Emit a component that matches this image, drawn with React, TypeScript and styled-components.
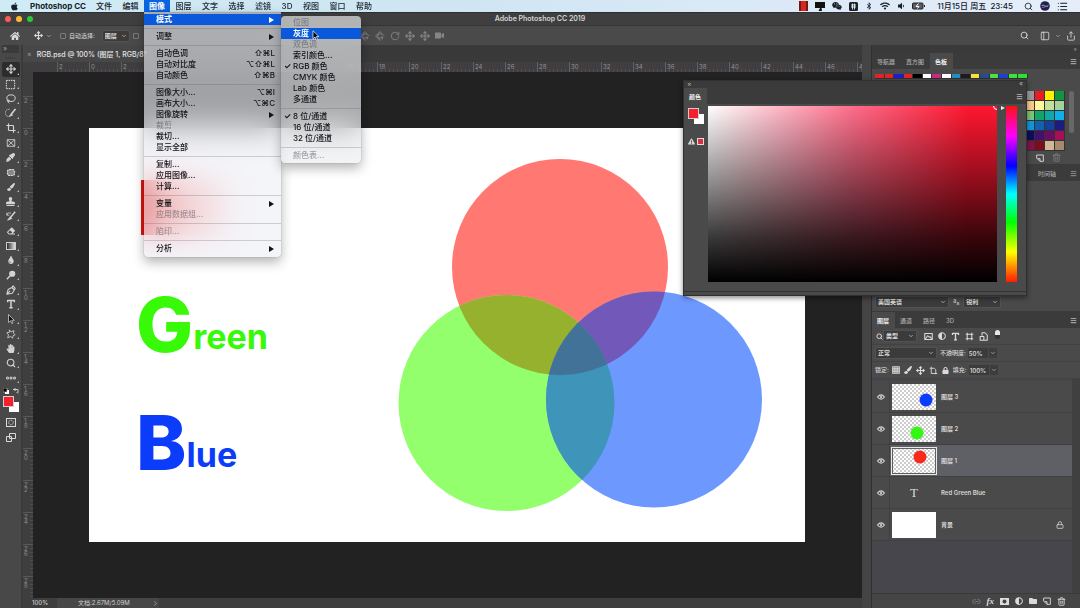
import React from 'react';
import styled, { createGlobalStyle, css } from 'styled-components';
import {
  Move, SquareDashed, Lasso, Crop, Search, Ellipsis, ChevronDown, ChevronRight, Menu as MenuIcon,
  Share, Lock, Trash2, Rotate3d, RotateCw, Link2, List, PanelLeft,
} from 'lucide-react';
import {
  FaApple, FaWeixin, FaBluetoothB, FaWifi, FaVolumeDown, FaEyeDropper, FaPaintBrush, FaStamp, FaEraser, FaTint,
  FaHandPaper, FaHome, FaFolder, FaAdjust, FaLock, FaExclamationTriangle, FaVideo,
} from 'react-icons/fa';

const Global = createGlobalStyle`
  * { box-sizing: border-box; }
  body { margin: 0; background: #222; }
  body, button, select, input {
    font-family: Inter, "Noto Sans CJK SC", sans-serif;
  }
  button, select, input { margin: 0; padding: 0; border: 0; background: none; color: inherit; font-size: inherit; }
  ul { list-style: none; margin: 0; padding: 0; }
  svg { display: block; flex: none; }
`;

const Shell = styled.div`
  min-height: 100vh;
  display: flex;
  flex-direction: column;
  background: #464646;
  color: #d6d6d6;
  font-size: 7px;
  line-height: 10px;
`;

/* ---------- system menu bar ---------- */

const MacBar = styled.header`
  position: relative;
  z-index: 5;
  height: 13px;
  display: flex;
  align-items: center;
  background: linear-gradient(90deg, #cfecf6, #cfe5f2 40%, #e6edfa);
  border-bottom: 1px solid #2c3034;
  color: #15202a;
  font-size: 8px;
  line-height: 12px;
`;
const AppleSlot = styled.div`
  width: 30px;
  padding-left: 10px;
`;
const AppName = styled.strong`
  width: 61px;
  font-weight: 700;
  white-space: nowrap;
`;
const MenuList = styled.ul`
  width: 286px;
  display: flex;
  justify-content: space-between;
`;
const MenuEntry = styled.li`
  position: relative;
`;
const MenuButton = styled.button<{ $open?: boolean }>`
  display: block;
  height: 12px;
  padding: 0 5px;
  line-height: 12px;
  font-weight: 500;
  white-space: nowrap;
  ${(p) => p.$open && css`background: #0a63e0; color: #fff; font-weight: 700;`}
`;
const Tray = styled.div`
  margin-left: auto;
  padding-right: 12px;
  display: flex;
  align-items: center;
  gap: 7px;
  white-space: nowrap;
`;
const Clock = styled.span`
  padding: 0 4px 0 5px;
  font-weight: 500;
`;

/* ---------- drop-down menus ---------- */

const Dropdown = styled.ul<{ $sub?: boolean }>`
  position: absolute;
  top: ${(p) => (p.$sub ? '2px' : '100%')};
  left: ${(p) => (p.$sub ? '100%' : '0')};
  width: ${(p) => (p.$sub ? 80 : 137)}px;
  padding: ${(p) => (p.$sub ? '1px 0 2px' : '2px 0 3px')};
  border-radius: ${(p) => (p.$sub ? '4px' : '0 0 4px 4px')};
  font-size: 8px;
  line-height: 11px;
  font-weight: 500;
  color: #111216;
`;
const Glass = styled.div<{ $sub?: boolean }>`
  position: absolute;
  inset: 0;
  border-radius: inherit;
  background: ${(p) => (p.$sub ? 'rgba(236, 238, 242, .66)' : 'rgba(238, 239, 245, .62)')};
  backdrop-filter: blur(16px);
  box-shadow: 0 0 1px rgba(0, 0, 0, .5), 0 5px 12px rgba(0, 0, 0, .3);
`;
const Item = styled.li`
  position: relative;
`;
const ItemButton = styled.button<{ $on?: boolean; $sub?: boolean }>`
  display: flex;
  align-items: center;
  width: 100%;
  height: 11px;
  padding: 0 6px 0 12px;
  line-height: 11px;
  font-weight: 500;
  white-space: nowrap;
  text-align: left;
  ${(p) => p.$sub && css`padding-left: 3px;`}
  &:disabled { color: rgba(60, 60, 68, .45); }
  ${(p) => p.$on && css`background: #0a59dc; color: #fff; font-weight: 700;`}
`;
const Tick = styled.span`
  width: 9px;
  font-weight: 700;
`;
const Keys = styled.span`
  margin-left: auto;
`;
const Arrow = styled.span`
  margin-left: auto;
  margin-right: 1px;
  border-left: 5px solid currentColor;
  border-top: 3px solid transparent;
  border-bottom: 3px solid transparent;
`;
const Rule = styled.li`
  position: relative;
  height: 6px;
  display: flex;
  align-items: center;
  &::after { content: ''; flex: 1; height: 1px; background: rgba(80, 80, 90, .24); }
`;
const Pointer = styled.svg`
  position: absolute;
  left: 31px;
  top: 2px;
  z-index: 2;
`;

/* ---------- window chrome ---------- */

const TitleBar = styled.div`
  display: grid;
  grid-template-columns: 1fr auto 1fr;
  align-items: center;
  height: 13px;
  padding: 0 5px;
  background: #3f3f3f;
  border-bottom: 1px solid #343434;
  font-size: 7px;
  font-weight: 600;
`;
const Lights = styled.div`
  display: flex;
  gap: 5px;
`;
const Light = styled.button`
  width: 6px;
  height: 6px;
  border-radius: 50%;
  background: ${(p) => p.color};
`;
const OptionsBar = styled.div`
  display: flex;
  align-items: center;
  height: 19px;
  padding: 0 4px 0 10px;
  background: #4a4a4a;
  font-size: 6px;
  white-space: nowrap;
`;
const OptionsLeft = styled.div`
  display: flex;
  align-items: center;
  gap: 3px;
  width: 350px;
`;
const IconButton = styled.button<{ $dim?: boolean }>`
  display: flex;
  align-items: center;
  justify-content: center;
  color: ${(p) => (p.$dim ? '#858585' : '#dadada')};
`;
const OptionSlot = styled.div`
  width: 21px;
`;
const IconRow = styled.div<{ $gap: number }>`
  display: flex;
  align-items: center;
  gap: ${(p) => p.$gap}px;
`;
const PushRight = styled(IconRow)`
  margin-left: auto;
`;
const CheckLabel = styled.label`
  display: flex;
  align-items: center;
  gap: 3px;
`;
const Check = styled.input`
  appearance: none;
  width: 6px;
  height: 6px;
  border: 1px solid #7c7c7c;
  border-radius: 1px;
`;
const SelectBox = styled.span<{ $w: number }>`
  display: flex;
  align-items: center;
  width: ${(p) => p.$w}px;
  height: 12px;
  padding-right: 2px;
  background: #3b3b3b;
  border: 1px solid #525252;
  border-radius: 1px;
`;
const Select = styled.select`
  appearance: none;
  flex: 1;
  min-width: 0;
  height: 10px;
  padding-left: 2px;
  line-height: 10px;
  font-weight: 600;
  color: #d8d8d8;
`;

/* ---------- workspace ---------- */

const Workspace = styled.div`
  position: relative;
  flex: 1;
  display: flex;
`;
const Tools = styled.nav`
  width: 23px;
  padding: 0 2px;
  display: flex;
  flex-direction: column;
  align-items: center;
  background: #484848;
  border-right: 2px solid #3a3a3a;
`;
const ToolsHead = styled.div`
  align-self: stretch;
  height: 8px;
  line-height: 7px;
  padding-left: 1px;
  background: #3a3a3a;
  color: #9a9a9a;
`;
const Grip = styled.div`
  width: 10px;
  height: 2px;
  margin: 4px 0 3px;
  background: repeating-linear-gradient(90deg, #3a3a3a 0 1px, transparent 1px 2px);
`;
const ToolList = styled.div`
  display: grid;
  grid-auto-rows: 1fr;
  height: 323px;
`;
const Tool = styled.button<{ $on?: boolean }>`
  position: relative;
  width: 18px;
  display: flex;
  align-items: center;
  justify-content: center;
  color: #d4d4d4;
  border-radius: 2px;
  background: ${(p) => (p.$on ? '#2c2c2c' : 'none')};
  &::after {
    content: '';
    position: absolute;
    right: 1px;
    bottom: 2px;
    border-left: 2px solid transparent;
    border-bottom: 2px solid #b8b8b8;
  }
`;
const Swap = styled.div`
  display: flex;
  gap: 4px;
  height: 11px;
  align-items: center;
`;
const ColorPair = styled.div`
  display: grid;
  grid-template-columns: 11px 5px;
  grid-template-rows: 11px 5px;
`;
const Back = styled.button`
  grid-area: 1 / 1 / 3 / 3;
  margin: 6px 0 0 6px;
  background: #fff;
`;
const Fore = styled.button`
  grid-area: 1 / 1;
  background: #f61f2c;
  border: 1px solid #cfcfcf;
`;
const ModeButtons = styled.div`
  margin-top: 6px;
  display: grid;
  gap: 6px;
  color: #c4c4c4;
`;

const DocColumn = styled.main`
  flex: 1;
  min-width: 0;
  display: flex;
  flex-direction: column;
  background: #393939;
`;
const DocTabs = styled.div`
  display: flex;
  height: 17px;
`;
const DocTab = styled.button`
  display: flex;
  align-items: center;
  gap: 5px;
  padding: 0 6px 0 4px;
  background: #474747;
  font-size: 7px;
  font-weight: 500;
  color: #e6e6e6;
  white-space: nowrap;
`;
const CloseMark = styled.span`
  color: #a0a0a0;
  font-weight: 400;
`;
const RulerTop = styled.div`
  display: flex;
  height: 10px;
  padding-left: 34px;
  overflow: hidden;
  background: #403e40;
`;
const TopMark = styled.span`
  flex: none;
  width: 32px;
  height: 10px;
  padding-left: 1px;
  font-size: 6px;
  line-height: 10px;
  color: #919191;
  border-left: 1px solid #606060;
  background: repeating-linear-gradient(90deg, transparent 0 3px, #504e50 3px 4px) 0 100% / 100% 3px no-repeat;
`;
const DocBody = styled.div`
  flex: 1;
  display: flex;
`;
const RulerSide = styled.div`
  width: 10px;
  padding-top: 24px;
  background: #3f3e3f;
  contain: size;
  overflow: hidden;
`;
const SideMark = styled.div`
  height: 32px;
  padding: 1px 0 0 1px;
  display: flex;
  flex-direction: column;
  font-size: 6px;
  line-height: 5px;
  color: #8a8a8a;
  border-top: 1px solid #585858;
  background: repeating-linear-gradient(180deg, transparent 0 3px, #4e4e4e 3px 4px) 100% 0 / 3px 100% no-repeat;
`;
const Canvas = styled.div`
  flex: 1;
  min-width: 0;
  padding: 56px 0 56px 56px;
  background: #222;
`;
const Artboard = styled.div`
  width: 716px;
  max-width: 100%;
  height: 414px;
  display: flex;
  background: #fff;
`;
const Words = styled.div`
  flex: none;
  width: 256px;
  padding: 42px 0 0 47px;
  display: flex;
  flex-direction: column;
  gap: 42px;
`;
const RedPaint = styled.div`
  width: 90px;
  height: 74px;
  padding: 10px 0 0 5px;
  &::before {
    content: '';
    display: block;
    height: 55px;
    background: linear-gradient(90deg, #e0140f 14px, rgba(255, 40, 30, .55) 30px, rgba(255, 60, 50, .2));
  }
`;
const Word = styled.div`
  height: 76px;
  font-family: Inter, Arial, sans-serif;
  font-weight: 800;
  font-size: 76px;
  line-height: 76px;
  color: ${(p) => p.color};
  white-space: nowrap;
`;
const Small = styled.span`
  font-size: 34px;
  line-height: 1;
  font-weight: 700;
  vertical-align: 3px;
`;
const StatusBar = styled.footer`
  display: flex;
  align-items: center;
  height: 10px;
  padding-left: 9px;
  background: #3e3e3e;
  color: #d0d0d0;
  font-size: 6px;
  line-height: 10px;
  white-space: nowrap;
`;
const Zoom = styled.span`
  width: 25px;
  font-weight: 500;
`;
const DocInfo = styled.button`
  display: flex;
  align-items: center;
  justify-content: space-between;
  width: 102px;
  height: 10px;
  padding-left: 21px;
  background: #474747;
  line-height: 10px;
`;

/* ---------- right dock ---------- */

const Gutter = styled.div`
  width: 10px;
  background: #444;
  border-right: 1px solid #303030;
`;
const Dock = styled.aside`
  width: 208px;
  display: flex;
  flex-direction: column;
  background: #4a4a4a;
  font-size: 6px;
`;
const DockHead = styled.div`
  height: 8px;
  padding-right: 3px;
  line-height: 7px;
  text-align: right;
  background: #3a3a3a;
  color: #9a9a9a;
`;
const Tabs = styled.div`
  display: flex;
  align-items: stretch;
  height: 16px;
  padding-right: 3px;
  background: #3b3b3b;
`;
const Tab = styled.button<{ $on?: boolean }>`
  padding: 0 6px 0 5px;
  font-size: 6px;
  white-space: nowrap;
  color: ${(p) => (p.$on ? '#f0f0f0' : '#a8a8a8')};
  font-weight: ${(p) => (p.$on ? 700 : 500)};
  background: ${(p) => (p.$on ? '#4a4a4a' : 'none')};
`;
const TabMenu = styled(IconButton)`
  margin-left: auto;
  color: #a0a0a0;
`;
const SwatchArea = styled.div`
  display: flex;
  flex-direction: column;
  gap: 12px;
  height: 82px;
  padding: 5px 6px 0 3px;
`;
const Recent = styled.div`
  display: grid;
  grid-template-columns: repeat(16, 1fr);
  width: 153px;
  height: 6px;
`;
const Chip = styled.button`
  background: ${(p) => p.color};
  border: solid #333;
  border-width: 0 1px 1px 0;
`;
const SwatchScroll = styled.div`
  display: flex;
  justify-content: space-between;
`;
const SwatchGrid = styled.div`
  display: grid;
  grid-template-columns: repeat(19, 10px);
  grid-auto-rows: 10px;
`;
const Scrollbar = styled.div`
  width: 5px;
  height: 42px;
  border-radius: 3px;
  background: #686868;
`;
const SwatchFoot = styled.div`
  display: flex;
  align-items: center;
  justify-content: flex-end;
  gap: 8px;
  height: 14px;
  padding-right: 19px;
  border-bottom: 1px solid #3a3a3a;
`;
const TimelineTabs = styled(Tabs)`
  justify-content: flex-end;
  gap: 8px;
`;
const CharPanel = styled.div`
  display: flex;
  align-items: flex-end;
  gap: 4px;
  height: 131px;
  padding: 0 0 3px 3px;
  border-bottom: 1px solid #3a3a3a;
`;
const FormRow = styled.div`
  display: flex;
  align-items: center;
  height: 17px;
  padding-left: 3px;
  border-bottom: 1px solid #424242;
  font-weight: 500;
  white-space: nowrap;
`;
const Spacer = styled.span<{ $w: number }>`
  width: ${(p) => p.$w}px;
`;
const Pill = styled.span`
  width: 5px;
  height: 9px;
  margin: 0 0 4px 2px;
  border-radius: 3px;
  background: linear-gradient(#e6e6e6 5px, #333 5px);
`;
const FieldLabel = styled.label`
  display: flex;
  align-items: center;
  gap: 2px;
`;
const Field = styled.input`
  width: 20px;
  height: 10px;
  padding-left: 1px;
  background: #3b3b3b;
  font-weight: 600;
  font-size: 6px;
`;
const Stepper = styled(IconButton)`
  height: 10px;
  width: 8px;
  margin-left: 1px;
  background: #3d3d3d;
`;
const Layers = styled.div`
  flex: 1;
  display: flex;
  background: #404040;
`;
const LayerList = styled.ul`
  flex: 1;
  margin-right: 8px;
  padding-top: 2px;
  background: #46464c;
`;
const LayerRow = styled.li`
  display: flex;
  align-items: stretch;
  height: 32px;
  background: #4a4a4a;
  border-bottom: 1px solid #404040;
  font-size: 6px;
`;
const EyeCell = styled.button`
  width: 18px;
  display: flex;
  align-items: center;
  justify-content: center;
  border-right: 1px solid #404040;
  color: #d8d8d8;
`;
const LayerMain = styled.div<{ $on?: boolean }>`
  flex: 1;
  display: flex;
  align-items: center;
  gap: 4px;
  padding: 0 8px 0 1px;
  font-weight: 600;
  background: ${(p) => (p.$on ? '#5f5f66' : 'none')};
`;
const Thumb = styled.div<{ $kind: 'alpha' | 'plain' | 'type'; $on?: boolean }>`
  position: relative;
  width: 46px;
  height: 28px;
  display: flex;
  align-items: center;
  justify-content: center;
  border: 1px solid ${(p) => (p.$on ? '#e8e8e8' : 'transparent')};
  background-clip: content-box;
  ${(p) => p.$on && css`padding: 1px;`}
  ${(p) => p.$kind === 'plain' && css`background-color: #fff;`}
  ${(p) => p.$kind === 'alpha' && css`
    background-image: conic-gradient(#ccc 25%, #fff 0 50%, #ccc 0 75%, #fff 0);
    background-size: 4px 4px;
  `}
`;
const TypeGlyph = styled.span`
  font-family: "Liberation Serif", serif;
  font-size: 13px;
  font-weight: 400;
  color: #dcdcdc;
`;
const LayerName = styled.span`
  flex: 1;
`;
const LayerFoot = styled.div`
  display: flex;
  align-items: center;
  justify-content: flex-end;
  gap: 6px;
  height: 15px;
  padding-right: 14px;
  background: #454545;
  border-top: 1px solid #3a3a3a;
`;
const Fx = styled.i`
  font-family: "Liberation Serif", serif;
  font-size: 9px;
  font-weight: 700;
`;

/* ---------- floating colour window ---------- */

const ColorWindow = styled.section`
  position: absolute;
  top: 35px;
  right: 53px;
  width: 344px;
  z-index: 2;
  background: #4a4a4a;
  border: 1px solid #303030;
  box-shadow: 0 2px 5px rgba(0, 0, 0, .45);
`;
const ColorHead = styled.div`
  display: flex;
  justify-content: space-between;
  height: 7px;
  padding: 0 3px;
  line-height: 6px;
  background: #3a3a3a;
  color: #b0b0b0;
`;
const ColorBody = styled.div`
  display: flex;
  height: 187px;
  padding: 2px 9px 0 4px;
`;
const ColorSide = styled.div`
  width: 20px;
  padding-top: 2px;
`;
const Warn = styled.div`
  display: flex;
  align-items: center;
  gap: 2px;
  margin-top: 14px;
`;
const WarnChip = styled.button`
  width: 7px;
  height: 7px;
  background: #d8303c;
  border: 1px solid #ddd;
`;
const SatField = styled.div`
  position: relative;
  flex: 1;
  height: 176px;
  overflow: hidden;
  background: linear-gradient(to top, #000, rgba(0, 0, 0, .78) 25%, rgba(0, 0, 0, .46) 55%, transparent), linear-gradient(90deg, #fff, #ff6d8a 50%, #ff1730 90%);
`;
const Ring = styled.span`
  position: absolute;
  right: -4px;
  top: -4px;
  width: 8px;
  height: 8px;
  border: 1px solid #fff;
  border-radius: 50%;
`;
const HuePointer = styled.span`
  margin: 0 1px 0 4px;
  height: 0;
  border-left: 4px solid #f0f0f0;
  border-top: 2px solid transparent;
  border-bottom: 2px solid transparent;
`;
const Hue = styled.div`
  width: 11px;
  height: 176px;
  background: linear-gradient(#ff1010, #f0f 17%, #00f 34%, #0ff 50%, #0f0 66%, #ff0 83%, #ff1a00);
`;
const ColorFoot = styled.div`
  height: 4px;
  border-top: 1px solid #333;
`;

/* ---------- small drawings ---------- */

const Glyph = ({ d, size = 10, fill = 'none', w = 1 }: { d: string; size?: number; fill?: string; w?: number }) => (
  <svg width={size} height={size} viewBox="0 0 12 12" fill={fill} stroke="currentColor" strokeWidth={w} strokeLinejoin="round">
    <path d={d} />
  </svg>
);
const NewPage = () => <Glyph size={8} w={1.4} d="M1 1.500h10v9.500h-5l-4-4h4v4M1 1.500v5" />;
const MoveArrows = ({ size = 10 }: { size?: number }) => <Move size={size} strokeWidth={2.8} />;
const Hamburger = () => <MenuIcon size={7} strokeWidth={4} />;
const GradientIcon = () => (
  <svg width="10" height="8" viewBox="0 0 10 8">
    <defs><linearGradient id="tg"><stop offset="0" stopColor="#222" /><stop offset="1" stopColor="#eee" /></linearGradient></defs>
    <rect x=".5" y=".5" width="9" height="7" fill="url(#tg)" stroke="#ccc" />
  </svg>
);
const PatchIcon = () => (
  <svg width="10" height="9" viewBox="0 0 10 9"><rect x="1.500" y="1.500" width="7" height="6" rx="2" fill="#888" stroke="#ddd" strokeWidth="1.200" strokeDasharray="2 .6" /></svg>
);
const Dodge = () => (
  <svg width="10" height="10" viewBox="0 0 12 12"><circle cx="7.500" cy="4.500" r="3.700" fill="currentColor" /><path d="M5 7L1 11" stroke="currentColor" strokeWidth="1.600" /></svg>
);
const QuickSelect = () => (
  <svg width="11" height="10" viewBox="0 0 12 11" fill="none" stroke="currentColor">
    <path d="M5 1.500A4 4 0 1 0 6 9" strokeDasharray="1.500 1" />
    <path d="M11.500 1L7 6.500" strokeWidth="1.800" /><path d="M7 6l-2 3 3-1z" fill="currentColor" />
  </svg>
);
const HistoryBrush = () => (
  <svg width="10" height="10" viewBox="0 0 12 12" fill="none" stroke="currentColor">
    <path d="M11 1L5 8" strokeWidth="1.800" /><path d="M5 7l-3 4 5-2z" fill="currentColor" /><path d="M1 5a3 3 0 0 1 5-2M1 2v3h3" />
  </svg>
);
const Pen = () => (
  <svg width="10" height="10" viewBox="0 0 12 12" fill="none" stroke="currentColor" strokeWidth="1.300">
    <path d="M1 11l1.500-5.500L7 3l3 3-2.500 4zM1 11l4-4M7 3l1.500-2L11 4l-1 2" strokeLinejoin="round" />
  </svg>
);
const Arrowhead = () => (
  <svg width="8" height="10" viewBox="0 0 8 10"><path d="M1.500.5v8l2-1.800 1.300 2.900 1.200-.6-1.300-2.700h2.600z" fill="#111" stroke="#ccc" strokeWidth=".8" /></svg>
);
const TypeTool = ({ size = 10 }: { size?: number }) => (
  <Glyph size={size} w={1.8} d="M2 4V1.800h8V4M6 2v8.500M4 10.500h4" />
);
const LayerEye = () => (
  <svg width="8" height="6" viewBox="0 0 8 6"><path d="M.5 3Q4-1.200 7.500 3 4 7.200.5 3z" fill="none" stroke="currentColor" strokeWidth="1.100" /><circle cx="4" cy="3" r="1.100" fill="currentColor" /></svg>
);

const toolset: [string, React.ReactNode][] = [
  ['移动', <MoveArrows />],
  ['选框', <SquareDashed size={11} strokeWidth={2.4} />],
  ['套索', <Lasso size={10} strokeWidth={2.4} />],
  ['快速选择', <QuickSelect />],
  ['裁剪', <Crop size={10} strokeWidth={2.8} />],
  ['图框', <Glyph d="M1.500 2h9v8h-9zM1.500 2l9 8M10.500 2l-9 8" />],
  ['吸管', <FaEyeDropper size={9} />],
  ['修补', <PatchIcon />],
  ['画笔', <FaPaintBrush size={8} />],
  ['仿制图章', <FaStamp size={9} />],
  ['历史记录画笔', <HistoryBrush />],
  ['橡皮擦', <FaEraser size={8} />],
  ['渐变', <GradientIcon />],
  ['模糊', <FaTint size={8} />],
  ['减淡', <Dodge />],
  ['钢笔', <Pen />],
  ['文字', <TypeTool />],
  ['路径选择', <Arrowhead />],
  ['自定形状', <Glyph d="M4 1l2 2.500L9.500 2 9 5l2 2-2.500 1L8 11 5.500 9 2 10.500 3 7 1 4.500 4 4z" />],
  ['抓手', <FaHandPaper size={9} />],
  ['缩放', <Search size={10} strokeWidth={2.6} />],
  ['更多', <Ellipsis size={12} strokeWidth={4} />],
];

type Entry = { t: string; keys?: string; sub?: boolean; off?: boolean; on?: boolean; tick?: boolean } | null;

const imageMenu: Entry[] = [
  { t: '模式', sub: true, on: true }, null,
  { t: '调整', sub: true }, null,
  { t: '自动色调', keys: '⇧⌘L' }, { t: '自动对比度', keys: '⌥⇧⌘L' }, { t: '自动颜色', keys: '⇧⌘B' }, null,
  { t: '图像大小...', keys: '⌥⌘I' }, { t: '画布大小...', keys: '⌥⌘C' }, { t: '图像旋转', sub: true },
  { t: '裁剪', off: true }, { t: '裁切...' }, { t: '显示全部' }, null,
  { t: '复制...' }, { t: '应用图像...' }, { t: '计算...' }, null,
  { t: '变量', sub: true }, { t: '应用数据组...', off: true }, null,
  { t: '陷印...', off: true }, null,
  { t: '分析', sub: true },
];
const modeMenu: Entry[] = [
  { t: '位图', off: true }, { t: '灰度', on: true }, { t: '双色调', off: true }, { t: '索引颜色...' },
  { t: 'RGB 颜色', tick: true }, { t: 'CMYK 颜色' }, { t: 'Lab 颜色' }, { t: '多通道' }, null,
  { t: '8 位/通道', tick: true }, { t: '16 位/通道' }, { t: '32 位/通道' }, null,
  { t: '颜色表...', off: true },
];

const ModeMenu = () => (
  <Dropdown $sub>
    <Glass $sub />
    {modeMenu.map((e, i) => e ? (
      <Item key={i}>
        <ItemButton $sub $on={e.on} disabled={e.off}><Tick>{e.tick ? '✓' : ''}</Tick>{e.t}</ItemButton>
        {e.on && (
          <Pointer width="8" height="11" viewBox="0 0 8 11">
            <path d="M1 .8v8l2-1.800 1.400 3.200 1.300-.6-1.400-3h2.600z" fill="#000" stroke="#fff" strokeWidth=".7" />
          </Pointer>
        )}
      </Item>
    ) : <Rule key={i} />)}
  </Dropdown>
);

const ImageMenu = () => (
  <Dropdown>
    <Glass />
    {imageMenu.map((e, i) => e ? (
      <Item key={i}>
        <ItemButton $on={e.on} disabled={e.off}>
          {e.t}
          {e.keys && <Keys>{e.keys}</Keys>}
          {e.sub && <Arrow />}
        </ItemButton>
        {e.on && <ModeMenu />}
      </Item>
    ) : <Rule key={i} />)}
  </Dropdown>
);

const menus = ['文件', '编辑', '图像', '图层', '文字', '选择', '滤镜', '3D', '视图', '窗口', '帮助'];

const recent = ['#e02428', '#e02428', '#1b1bd8', '#e02428', '#000', '#fff', '#c92a80', '#fff', '#1f8fc4', '#1c1c1c', '#f5e342', '#274a90', '#4be04a', '#1f3fd8', '#3be33c', '#2ce22c'];
const swatchRows = [
  ['#9a9a9a', '#e81c26', '#fff100', '#0f9640'],
  ['#fbc88c', '#fff79a', '#c4df9a', '#a2d39b'],
  ['#7cc576', '#12a56a', '#10a8a4', '#12aeea'],
  ['#1296dc', '#1161ae', '#12429a', '#1b1c82'],
  ['#0c0d5c', '#43106c', '#6a0e64', '#a60f58'],
  ['#85104a', '#7c0c1e', '#d4b896', '#a38a70'],
];
const swatches = swatchRows.flatMap((row, r) => [
  ...Array.from({ length: 15 }, (_, i) => `hsl(${i * 24} 70% ${75 - r * 11}%)`), ...row,
]);

const layers = [
  { name: '图层 3', dot: '#0a3cff', x: 34, y: 16 },
  { name: '图层 2', dot: '#35f715', x: 25, y: 17 },
  { name: '图层 1', dot: '#f72a1c', x: 28, y: 9, on: true },
  { name: 'Red Green Blue', type: true },
  { name: '背景', locked: true },
];

const Drop = ({ w, label, options }: { w: number; label: string; options: string[] }) => (
  <SelectBox $w={w}>
    <Select aria-label={label}>{options.map((o) => <option key={o}>{o}</option>)}</Select>
    <ChevronDown size={6} strokeWidth={2.5} />
  </SelectBox>
);

const topMarks = Array.from({ length: 26 }, (_, i) => Math.abs(i * 2 - 2));
const sideMarks = Array.from({ length: 16 }, (_, i) => Math.abs(i * 2 - 2));

const Circles = () => (
  <svg width="460" height="414" viewBox="0 0 460 414">
    <defs>
      <clipPath id="inRed"><circle cx="215" cy="139" r="108" /></clipPath>
      <clipPath id="inGreen"><circle cx="161.500" cy="275" r="108" /></clipPath>
    </defs>
    <circle cx="215" cy="139" r="108" fill="#ff7872" />
    <circle cx="161.500" cy="275" r="108" fill="#93ff6d" />
    <circle cx="309" cy="271.500" r="108" fill="#6d99ff" />
    <g clipPath="url(#inRed)">
      <circle cx="161.500" cy="275" r="108" fill="#95b12d" />
      <circle cx="309" cy="271.500" r="108" fill="#7258b8" />
    </g>
    <g clipPath="url(#inGreen)">
      <circle cx="309" cy="271.500" r="108" fill="#3f94ba" />
      <g clipPath="url(#inRed)"><circle cx="309" cy="271.500" r="108" fill="#437298" /></g>
    </g>
  </svg>
);

export default function App() {
  return (
    <Shell>
      <Global />
      <MacBar>
        <AppleSlot><FaApple size={9} /></AppleSlot>
        <AppName>Photoshop CC</AppName>
        <MenuList>
          {menus.map((m) => (
            <MenuEntry key={m}>
              <MenuButton $open={m === '图像'}>{m}</MenuButton>
              {m === '图像' && <ImageMenu />}
            </MenuEntry>
          ))}
        </MenuList>
        <Tray>
          <svg width="9" height="10" viewBox="0 0 9 10"><path d="M0 0h9v10H0z" fill="#7a1512" /><path d="M2 0h5v10H2z" fill="#d4271f" /></svg>
          <svg width="10" height="9" viewBox="0 0 10 9"><path d="M0 0h10v6H6.500L7 9H3.500L5 6H0z" fill="#111" /></svg>
          <FaWeixin size={10} />
          <svg width="9" height="9" viewBox="0 0 9 9"><rect width="9" height="9" rx="1.500" fill="#1a2028" /><path d="M2 3h5M2 5h5M3.500 1.500v6M5.500 1.500v6" stroke="#fff" strokeWidth=".8" /></svg>
          <FaBluetoothB size={8} />
          <FaWifi size={10} />
          <FaVolumeDown size={8} />
          <svg width="13" height="8" viewBox="0 0 13 8"><rect x=".5" y="1" width="10.500" height="6" rx="1" fill="#555c66" stroke="#222" /><path d="M12.500 3v2" stroke="#222" /><path d="M6.500 1.500L4 4.500h3L5.500 6.500" stroke="#fff" fill="none" /></svg>
          <Clock>11月15日 周五&nbsp; 23:45</Clock>
          <Search size={9} strokeWidth={2.2} />
          <svg width="10" height="10" viewBox="0 0 10 10"><circle cx="5" cy="5" r="4.800" fill="#20224a" /><path d="M1.500 5c2-3 4 3 7-1" stroke="#6cf" fill="none" /><path d="M2 6c2 2 4-3 6 0" stroke="#e5539b" fill="none" /></svg>
          <List size={11} strokeWidth={2.4} />
        </Tray>
      </MacBar>

      <TitleBar>
        <Lights>
          <Light color="#fc5b57" aria-label="关闭" />
          <Light color="#fdbc2e" aria-label="最小化" />
          <Light color="#2ac840" aria-label="缩放" />
        </Lights>
        <span>Adobe Photoshop CC 2019</span>
      </TitleBar>

      <OptionsBar>
        <OptionsLeft>
          <OptionSlot><IconButton aria-label="主页"><FaHome size={10} /></IconButton></OptionSlot>
          <IconButton aria-label="移动工具"><MoveArrows size={9} /></IconButton>
          <ChevronDown size={6} />
          <Spacer $w={2} />
          <CheckLabel><Check type="checkbox" />自动选择:</CheckLabel>
          <Spacer $w={1} />
          <Drop w={28} label="自动选择对象" options={['图层', '组']} />
          <Check type="checkbox" aria-label="显示变换控件" />
        </OptionsLeft>
        <IconRow $gap={5}>
          <IconButton $dim aria-label="旋转"><Rotate3d size={10} /></IconButton>
          <IconButton $dim aria-label="环绕"><Rotate3d size={10} /></IconButton>
          <IconButton $dim aria-label="滚动"><RotateCw size={10} /></IconButton>
          <IconButton $dim aria-label="平移"><MoveArrows size={10} /></IconButton>
          <IconButton $dim aria-label="滑动"><MoveArrows size={10} /></IconButton>
          <IconButton $dim aria-label="相机"><FaVideo size={9} /></IconButton>
        </IconRow>
        <PushRight $gap={5}>
          <IconButton aria-label="搜索"><Search size={9} strokeWidth={2.4} /></IconButton>
          <Spacer $w={1} />
          <IconButton aria-label="工作区"><PanelLeft size={10} /></IconButton>
          <ChevronDown size={6} />
          <IconButton aria-label="共享"><Share size={10} /></IconButton>
        </PushRight>
      </OptionsBar>

      <Workspace>
        <Tools>
          <ToolsHead>»</ToolsHead>
          <Grip />
          <ToolList>
            {toolset.map(([name, icon], i) => <Tool key={name} $on={i === 0} aria-label={name}>{icon}</Tool>)}
          </ToolList>
          <Swap>
            <svg width="6" height="6" viewBox="0 0 6 6"><path d="M2 2h4v4H2z" fill="#fff" /><path d="M0 0h4v4H0z" fill="#000" stroke="#ccc" strokeWidth=".6" /></svg>
            <svg width="6" height="6" viewBox="0 0 6 6"><path d="M2 0v3M0 1.500h5v3M3.500 4l1.500 1.500" stroke="#ccc" fill="none" /></svg>
          </Swap>
          <ColorPair><Back aria-label="背景色" /><Fore aria-label="前景色" /></ColorPair>
          <ModeButtons>
            <IconButton aria-label="快速蒙版">
              <svg width="10" height="9" viewBox="0 0 10 9" fill="none" stroke="currentColor"><rect x=".5" y=".5" width="9" height="8" /><circle cx="5" cy="4.500" r="2.300" strokeDasharray="1 .6" /></svg>
            </IconButton>
            <IconButton aria-label="屏幕模式">
              <svg width="10" height="9" viewBox="0 0 10 9" fill="none" stroke="currentColor"><path d="M3.500.5h6v5h-6zM.5 3.500h5v5h-5z" /></svg>
            </IconButton>
          </ModeButtons>
        </Tools>

        <DocColumn>
          <DocTabs>
            <DocTab><CloseMark>×</CloseMark>RGB.psd @ 100% (图层 1, RGB/8*</DocTab>
          </DocTabs>
          <RulerTop>{topMarks.map((n, i) => <TopMark key={i}>{n}</TopMark>)}</RulerTop>
          <DocBody>
            <RulerSide>
              {sideMarks.map((n, i) => <SideMark key={i}>{String(n).split('').map((c, k) => <span key={k}>{c}</span>)}</SideMark>)}
            </RulerSide>
            <Canvas>
              <Artboard>
                <Words>
                  <RedPaint />
                  <Word color="#38fa08">G<Small>reen</Small></Word>
                  <Word color="#0a3cfa">B<Small>lue</Small></Word>
                </Words>
                <Circles />
              </Artboard>
            </Canvas>
          </DocBody>
          <StatusBar>
            <Zoom>100%</Zoom>
            <DocInfo>文档:2.67M/5.09M<ChevronRight size={7} /></DocInfo>
          </StatusBar>
        </DocColumn>

        <Gutter />
        <Dock>
          <DockHead>»</DockHead>
          <Tabs>
            <Tab>导航器</Tab><Tab>直方图</Tab><Tab $on>色板</Tab>
            <TabMenu aria-label="面板菜单"><Hamburger /></TabMenu>
          </Tabs>
          <SwatchArea>
            <Recent>{recent.map((c, i) => <Chip key={i} color={c} aria-label={c} />)}</Recent>
            <SwatchScroll>
              <SwatchGrid>{swatches.map((c, i) => <Chip key={i} color={c} aria-label={c} />)}</SwatchGrid>
              <Scrollbar />
            </SwatchScroll>
          </SwatchArea>
          <SwatchFoot>
            <IconButton aria-label="新建色板"><NewPage /></IconButton>
            <IconButton $dim aria-label="删除色板"><Trash2 size={9} /></IconButton>
          </SwatchFoot>
          <TimelineTabs>
            <Tab>时间轴</Tab>
            <IconButton $dim aria-label="面板菜单"><Hamburger /></IconButton>
          </TimelineTabs>
          <CharPanel>
            <Drop w={74} label="语言" options={['美国英语']} />
            <span>a<sub>a</sub></span>
            <Drop w={38} label="消除锯齿" options={['锐利']} />
          </CharPanel>
          <Tabs>
            <Tab $on>图层</Tab><Tab>通道</Tab><Tab>路径</Tab><Tab>3D</Tab>
            <TabMenu aria-label="面板菜单"><Hamburger /></TabMenu>
          </Tabs>
          <FormRow>
            <Spacer $w={1} />
            <Search size={7} strokeWidth={3.4} />
            <Drop w={34} label="类型" options={['类型']} />
            <Spacer $w={7} />
            <IconRow $gap={5}>
              <IconButton aria-label="像素"><Glyph size={9} w={1.4} d="M1 2h10v8H1zM2 9l3-4 2 2 1-1 2 3" /></IconButton>
              <IconButton aria-label="调整"><FaAdjust size={8} /></IconButton>
              <IconButton aria-label="文字"><TypeTool size={9} /></IconButton>
              <IconButton aria-label="形状"><Glyph size={9} w={1.4} d="M3 1v10M9 1v10M1 3h10M1 9h10" /></IconButton>
              <IconButton aria-label="智能对象"><Glyph size={9} w={1.4} d="M4 5V1h4l3 3v7H7M1.500 6h5v5h-5z" /></IconButton>
              <Pill />
            </IconRow>
          </FormRow>
          <FormRow>
            <Drop w={62} label="混合模式" options={['正常']} />
            <Spacer $w={3} />
            <FieldLabel>不透明度: <Field defaultValue="50%" /></FieldLabel>
            <Stepper aria-label="不透明度"><ChevronDown size={6} /></Stepper>
          </FormRow>
          <FormRow>
            锁定:
            <Spacer $w={3} />
            <IconRow $gap={4}>
              <IconButton aria-label="透明像素"><Glyph size={8} w={1.6} d="M1 1h10v10H1zM4.300 1v10M7.700 1v10M1 4.300h10M1 7.700h10" /></IconButton>
              <IconButton aria-label="图像像素"><FaPaintBrush size={8} /></IconButton>
              <IconButton aria-label="位置"><MoveArrows size={9} /></IconButton>
              <IconButton aria-label="画板"><Glyph size={9} w={1.2} d="M3 1v9h8M1 3h6l2 2v6" /></IconButton>
              <IconButton aria-label="全部"><FaLock size={7} /></IconButton>
            </IconRow>
            <Spacer $w={4} />
            <FieldLabel>填充: <Field defaultValue="100%" /></FieldLabel>
            <Stepper aria-label="填充"><ChevronDown size={6} /></Stepper>
          </FormRow>
          <Layers>
            <LayerList>
              {layers.map((l) => (
                <LayerRow key={l.name}>
                  <EyeCell aria-label={`显示 ${l.name}`}><LayerEye /></EyeCell>
                  <LayerMain $on={l.on}>
                    <Thumb $kind={l.dot ? 'alpha' : l.type ? 'type' : 'plain'} $on={l.on}>
                      {l.dot && <svg width="44" height="26" viewBox="0 0 44 26"><circle cx={l.x} cy={l.y} r="6.500" fill={l.dot} /></svg>}
                      {l.type && <TypeGlyph>T</TypeGlyph>}
                    </Thumb>
                    <LayerName>{l.name}</LayerName>
                    {l.locked && <Lock size={8} strokeWidth={2.4} />}
                  </LayerMain>
                </LayerRow>
              ))}
            </LayerList>
          </Layers>
          <LayerFoot>
            <IconButton $dim aria-label="链接图层"><Link2 size={9} /></IconButton>
            <IconButton aria-label="图层样式"><Fx>fx</Fx></IconButton>
            <IconButton aria-label="图层蒙版"><svg width="9" height="7" viewBox="0 0 9 7"><path d="M0 0h9v7H0z" fill="#ddd" /><circle cx="4.500" cy="3.500" r="2" fill="#444" /></svg></IconButton>
            <IconButton aria-label="调整图层"><FaAdjust size={8} /></IconButton>
            <IconButton aria-label="新建组"><FaFolder size={8} /></IconButton>
            <IconButton aria-label="新建图层"><NewPage /></IconButton>
            <IconButton aria-label="删除图层"><Trash2 size={9} strokeWidth={2.4} /></IconButton>
          </LayerFoot>
        </Dock>

        <ColorWindow>
          <ColorHead><span>×</span><span>«</span></ColorHead>
          <Tabs>
            <Tab $on>颜色</Tab>
            <TabMenu aria-label="面板菜单"><Hamburger /></TabMenu>
          </Tabs>
          <ColorBody>
            <ColorSide>
              <ColorPair><Back aria-label="背景色" /><Fore aria-label="前景色" /></ColorPair>
              <Warn><FaExclamationTriangle size={7} /><WarnChip aria-label="最接近的可打印颜色" /></Warn>
            </ColorSide>
            <SatField><Ring /></SatField>
            <HuePointer />
            <Hue />
          </ColorBody>
          <ColorFoot />
        </ColorWindow>
      </Workspace>
    </Shell>
  );
}
